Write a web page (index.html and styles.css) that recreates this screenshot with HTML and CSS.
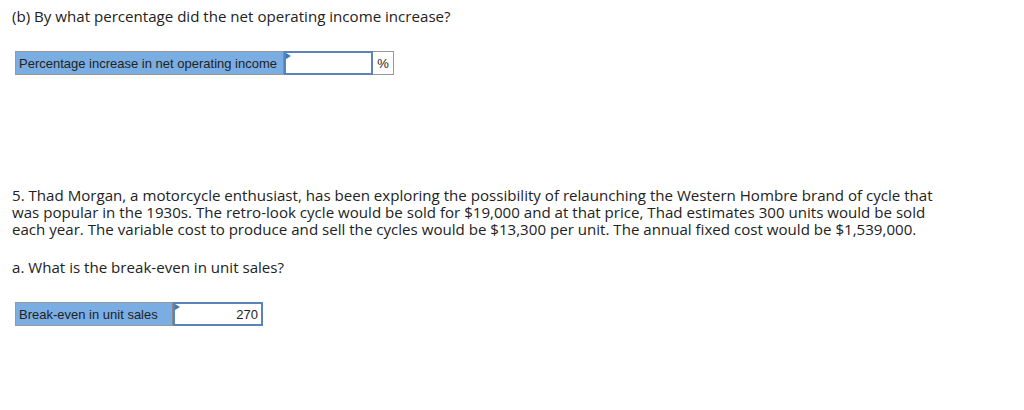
FILE: index.html
```html
<!DOCTYPE html>
<html>
<head>
<meta charset="utf-8">
<link rel="stylesheet" href="styles.css">
</head>
<body>
<div class="page">
  <p class="q">(b) By what percentage did the net operating income increase?</p>
  <div class="row row1">
    <div class="label lab1">Percentage increase in net operating income</div>
    <div class="input in1"><span class="flag"></span></div>
    <div class="unit">%</div>
  </div>
  <p class="para">5. Thad Morgan, a motorcycle enthusiast, has been exploring the possibility of relaunching the Western Hombre brand of cycle that was popular in the 1930s. The retro-look cycle would be sold for $19,000 and at that price, Thad estimates 300 units would be sold each year. The variable cost to produce and sell the cycles would be $13,300 per unit. The annual fixed cost would be $1,539,000.</p>
  <p class="q2">a. What is the break-even in unit sales?</p>
  <div class="row row2">
    <div class="label lab2">Break-even in unit sales</div>
    <div class="input in2"><span class="flag"></span>270</div>
  </div>
</div>
</body>
</html>
```
FILE: styles.css
```css
html, body { margin: 0; padding: 0; background: #fff; }
.page {
  padding: 6px 12px 0 12px;
  font-family: "Open Sans", "Lato", sans-serif;
  color: #222;
  font-size: 15.1px;
}
.q { margin: 0; line-height: 20px; }
.row {
  display: flex;
  margin-left: 3px;
  border: 1px solid #999;
  height: 22px;
  width: max-content;
  font-family: "Liberation Sans", Arial, sans-serif;
  font-size: 13px;
  color: #222;
}
.row1 { margin-top: 25px; }
.row2 { margin-top: 26px; }
.label {
  background: #7aaee3;
  display: flex;
  align-items: center;
  padding-left: 3px;
  border-right: 1px solid #888;
}
.lab1 { width: 264px; }
.lab2 { width: 153px; }
.input {
  position: relative;
  border: 2px solid #5a84b8;
  box-sizing: border-box;
  height: 24px;
  margin-top: -1px;
  background: #fff;
  display: flex;
  align-items: center;
  justify-content: flex-end;
  padding-right: 3px;
}
.in1 { width: 89px; }
.in2 { width: 90px; margin-right: -1px; }
.flag {
  position: absolute;
  left: 0;
  top: 0;
  width: 0;
  height: 0;
  border-top: 3px solid transparent;
  border-bottom: 3px solid transparent;
  border-left: 5px solid #3b78c2;
}
.unit {
  width: 20px;
  display: flex;
  align-items: center;
  justify-content: center;
  background: #fff;
}
.para {
  margin: 112px 0 0 0;
  line-height: 17px;
  width: 930px;
}
.q2 { margin: 21px 0 0 0; line-height: 17px; }
```
